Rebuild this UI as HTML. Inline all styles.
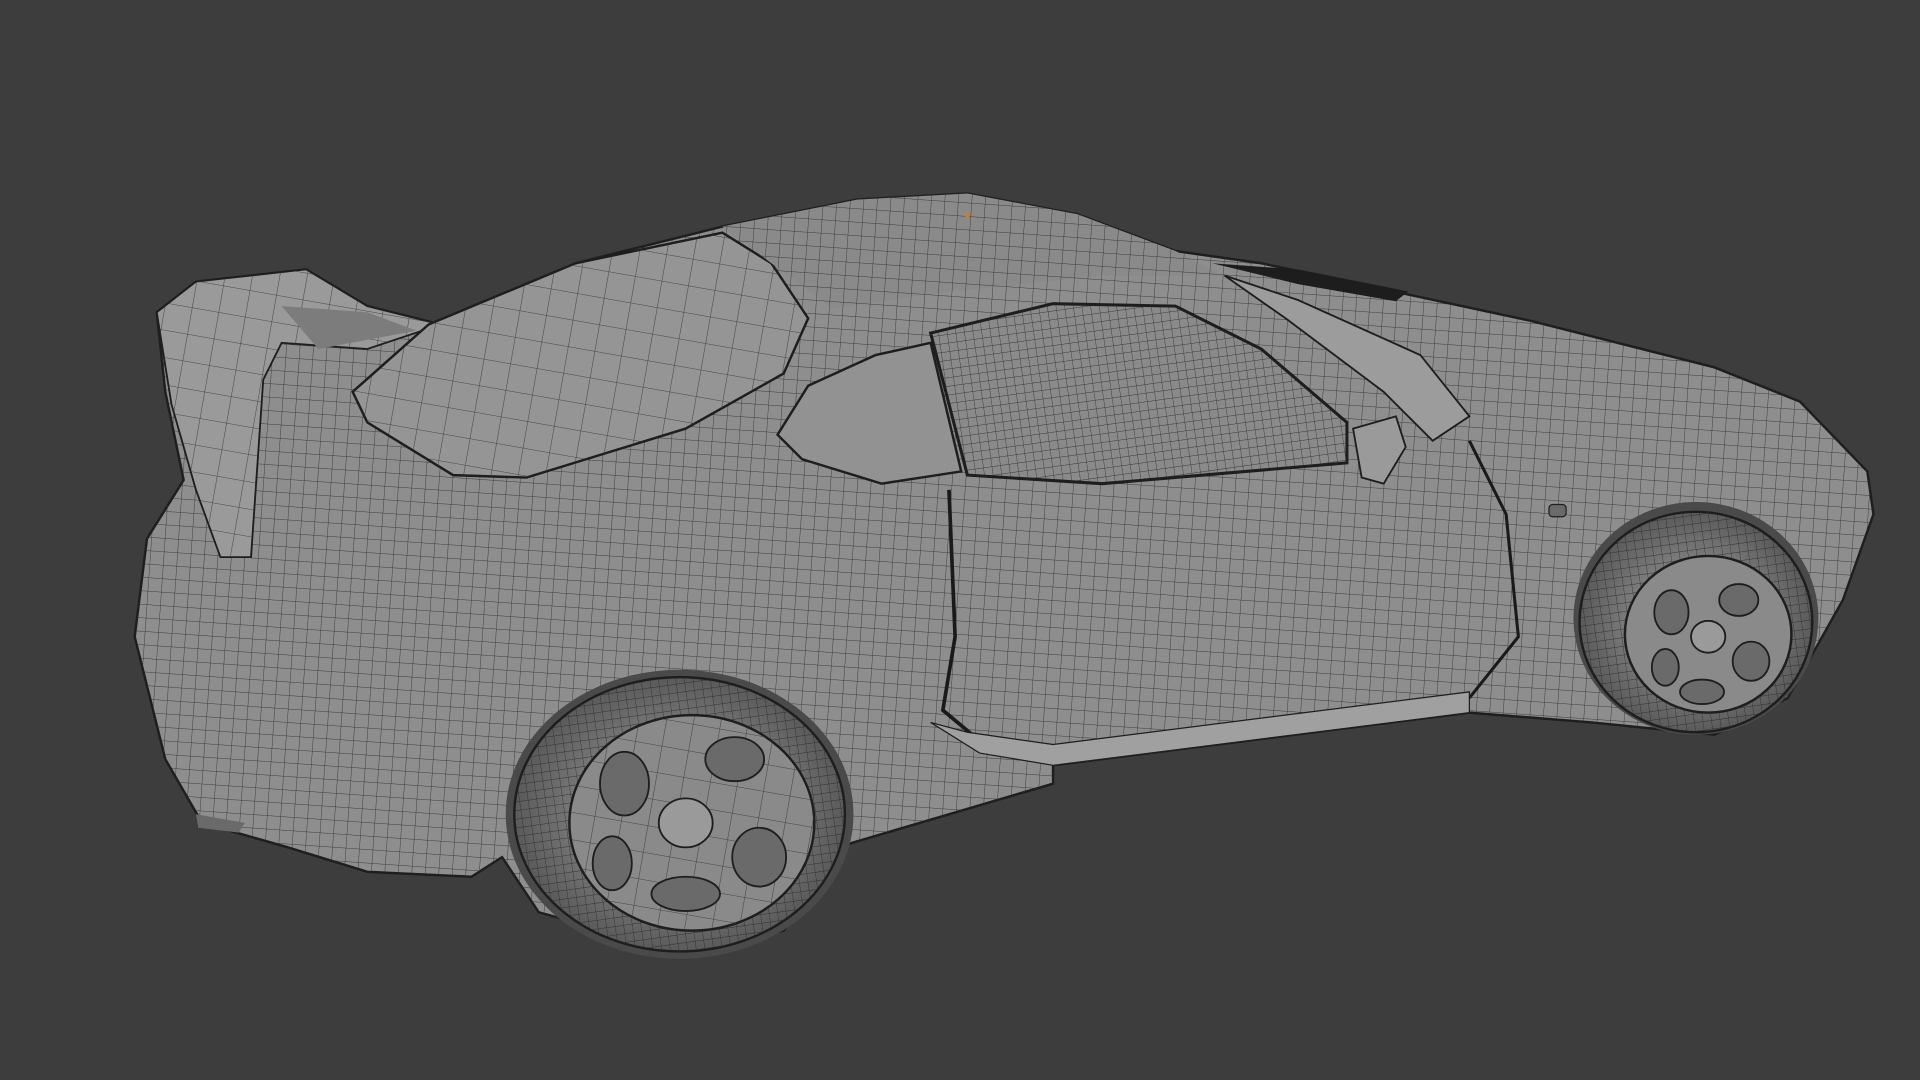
<!DOCTYPE html>
<html><head><meta charset="utf-8"><style>
html,body{margin:0;padding:0;background:#3d3d3d;width:1920px;height:1080px;overflow:hidden}
svg{display:block}
</style></head><body>
<svg width="1920" height="1080" viewBox="0 0 1568 882" preserveAspectRatio="none">
<defs>
<pattern id="g" width="11" height="11" patternUnits="userSpaceOnUse" patternTransform="rotate(4)">
<path d="M0 0H11M0 0V11" stroke="#2a2a2a" stroke-width="0.8" fill="none" opacity="0.8"/>
</pattern>
<pattern id="g2" width="7" height="7" patternUnits="userSpaceOnUse" patternTransform="rotate(-8)">
<path d="M0 0H7M0 0V7" stroke="#222" stroke-width="0.7" fill="none" opacity="0.8"/>
</pattern>
<pattern id="g3" width="22" height="22" patternUnits="userSpaceOnUse" patternTransform="rotate(10)">
<path d="M0 0H22M0 0V22" stroke="#333" stroke-width="0.9" fill="none" opacity="0.8"/>
</pattern>
<radialGradient id="tire" cx="50%" cy="50%" r="50%">
<stop offset="0.6" stop-color="#7a7a7a"/><stop offset="1" stop-color="#5a5a5a"/>
</radialGradient>
</defs>
<rect width="1568" height="882" fill="#3d3d3d"/>
<!-- body -->
<path id="body" d="M128,255 L160,230 L250,220 L300,250 L360,265 L470,215 L590,185 L700,163 L790,158 L880,175 L960,205 L1030,215 L1110,232 L1250,262 L1400,300 L1470,328 L1525,385 L1530,420 L1505,490 L1460,570 L1400,600 L1300,590 L1200,582 L860,625 L860,640 L690,690 L640,760 L560,778 L440,745 L410,700 L385,716 L300,712 L235,692 L165,672 L135,620 L110,520 L120,440 L150,392 L135,320 Z" fill="#8e8e8e" stroke="#1e1e1e" stroke-width="2"/>
<path d="M128,255 L160,230 L250,220 L300,250 L360,265 L470,215 L590,185 L700,163 L790,158 L880,175 L960,205 L1030,215 L1110,232 L1250,262 L1400,300 L1470,328 L1525,385 L1530,420 L1505,490 L1460,570 L1400,600 L1300,590 L1200,582 L860,625 L860,640 L690,690 L640,760 L560,778 L440,745 L410,700 L385,716 L300,712 L235,692 L165,672 L135,620 L110,520 L120,440 L150,392 L135,320 Z" fill="url(#g)"/>
<!-- spoiler -->
<path d="M128,255 L160,230 L250,220 L300,250 L360,265 L300,285 L230,280 L215,310 L205,455 L180,455 L160,400 L140,330 Z" fill="#9a9a9a" stroke="#1e1e1e" stroke-width="1.5"/>
<path d="M128,255 L160,230 L250,220 L300,250 L360,265 L300,285 L230,280 L215,310 L205,455 L180,455 L160,400 L140,330 Z" fill="url(#g3)"/>
<path d="M230,250 L300,255 L340,270 L260,285 Z" fill="#7c7c7c"/>
<!-- rear window -->
<path d="M288,320 L350,265 L470,215 L590,190 L630,215 L660,260 L640,305 L560,350 L430,390 L370,388 L300,345 Z" fill="#959595" stroke="#1e1e1e" stroke-width="2"/>
<path d="M288,320 L350,265 L470,215 L590,190 L630,215 L660,260 L640,305 L560,350 L430,390 L370,388 L300,345 Z" fill="url(#g3)"/>
<!-- roof panel -->
<path d="M590,185 L700,163 L790,158 L880,175 L960,205 L1000,225 L900,225 L760,240 L680,252 L630,215 Z" fill="#8a8a8a"/>
<path d="M590,185 L700,163 L790,158 L880,175 L960,205 L1000,225 L900,225 L760,240 L680,252 L630,215 Z" fill="url(#g)"/>
<!-- side quarter window -->
<path d="M635,355 L660,315 L715,290 L760,280 L785,385 L720,395 L655,375 Z" fill="#929292" stroke="#1e1e1e" stroke-width="2"/>
<!-- main side window -->
<path d="M760,272 L860,248 L960,250 L1030,285 L1100,345 L1100,378 L900,395 L790,388 Z" fill="#8a8a8a" stroke="#1e1e1e" stroke-width="2.5"/>
<path d="M760,272 L860,248 L960,250 L1030,285 L1100,345 L1100,378 L900,395 L790,388 Z" fill="url(#g2)"/>
<!-- mirror -->
<path d="M1105,350 L1140,340 L1148,365 L1130,395 L1112,390 Z" fill="#9a9a9a" stroke="#1e1e1e" stroke-width="1.5"/>
<!-- windshield pillar / hood -->
<path d="M1000,225 L1060,245 L1160,290 L1200,340 L1170,360 L1130,320 L1050,260 Z" fill="#9c9c9c" stroke="#1e1e1e" stroke-width="1.5"/>
<path d="M990,215 L1060,220 L1150,238 L1140,246 L1060,232 Z" fill="#1d1d1d"/>
<!-- door line -->
<path d="M775,400 L780,520 L770,580 L800,605 L860,615 L1200,575" fill="none" stroke="#1a1a1a" stroke-width="3"/>
<path d="M1200,360 L1230,420 L1240,520 L1200,570" fill="none" stroke="#1a1a1a" stroke-width="2.5"/>
<!-- side skirt -->
<path d="M760,590 L800,615 L860,625 L1200,582 L1200,565 L860,608 L790,598 Z" fill="#a0a0a0" stroke="#1e1e1e" stroke-width="1"/>
<!-- rear wheel arch -->
<ellipse cx="555" cy="665" rx="142" ry="118" fill="#4a4a4a"/>
<!-- rear wheel -->
<ellipse cx="555" cy="665" rx="135" ry="112" fill="url(#tire)" stroke="#1e1e1e" stroke-width="2"/>
<ellipse cx="555" cy="665" rx="135" ry="112" fill="url(#g2)"/>
<ellipse cx="565" cy="672" rx="100" ry="88" fill="#8a8a8a" stroke="#1e1e1e" stroke-width="2"/>
<ellipse cx="565" cy="672" rx="100" ry="88" fill="url(#g3)"/>
<g fill="#6a6a6a" stroke="#1e1e1e" stroke-width="1.5">
<ellipse cx="510" cy="640" rx="20" ry="26"/><ellipse cx="600" cy="620" rx="24" ry="18"/>
<ellipse cx="620" cy="700" rx="22" ry="24"/><ellipse cx="560" cy="730" rx="28" ry="14"/>
<ellipse cx="500" cy="705" rx="16" ry="22"/></g>
<ellipse cx="560" cy="672" rx="22" ry="20" fill="#9a9a9a" stroke="#1e1e1e" stroke-width="1.5"/>
<!-- front wheel -->
<ellipse cx="1385" cy="505" rx="100" ry="95" fill="#4a4a4a"/>
<ellipse cx="1385" cy="508" rx="95" ry="90" fill="url(#tire)" stroke="#1e1e1e" stroke-width="2"/>
<ellipse cx="1385" cy="508" rx="95" ry="90" fill="url(#g2)"/>
<ellipse cx="1395" cy="518" rx="68" ry="64" fill="#8a8a8a" stroke="#1e1e1e" stroke-width="2"/>
<g fill="#6a6a6a" stroke="#1e1e1e" stroke-width="1.5">
<ellipse cx="1365" cy="500" rx="14" ry="18"/><ellipse cx="1420" cy="490" rx="16" ry="13"/>
<ellipse cx="1430" cy="540" rx="15" ry="16"/><ellipse cx="1390" cy="565" rx="18" ry="10"/>
<ellipse cx="1360" cy="545" rx="11" ry="15"/></g>
<ellipse cx="1395" cy="520" rx="14" ry="13" fill="#9a9a9a" stroke="#1e1e1e" stroke-width="1.5"/>
<!-- rear bumper detail -->
<path d="M160,665 L200,672 L195,680 L162,676 Z" fill="#6a6a6a"/>
<rect x="1265" y="412" width="14" height="10" rx="3" fill="#6a6a6a" stroke="#1e1e1e"/>
<circle cx="790" cy="175" r="2.5" fill="#c08040"/>
</svg>
</body></html>
